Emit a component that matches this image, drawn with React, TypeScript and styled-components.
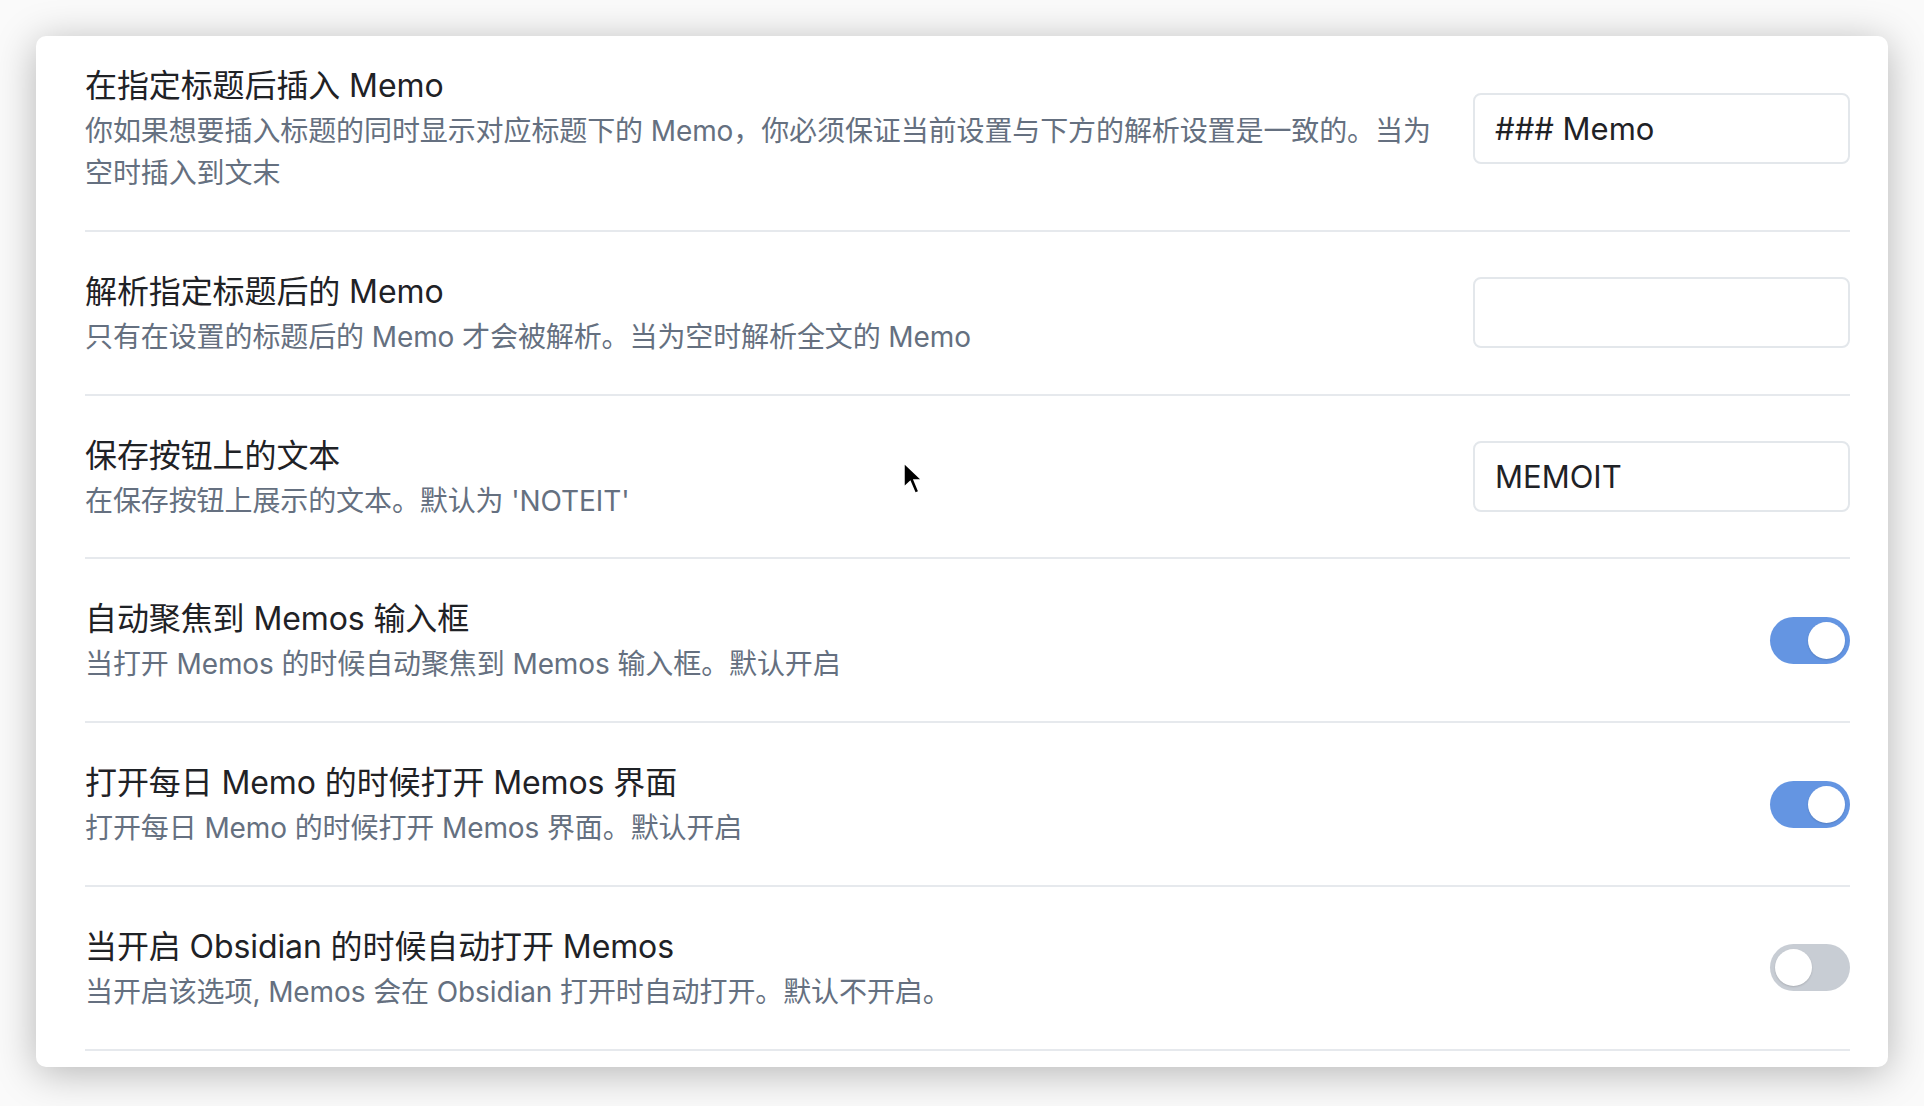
import React from "react";
import styled, { createGlobalStyle } from "styled-components";

const GlobalStyle = createGlobalStyle`
  html, body {
    margin: 0;
    padding: 0;
    background: #ffffff;
  }
  body {
    font-family: Inter, "Noto Sans CJK SC", sans-serif;
    -webkit-font-smoothing: antialiased;
  }
`;

const Page = styled.div`
  position: relative;
  width: 1924px;
  height: 1106px;
  padding: 36px 36px 0 36px;
  box-sizing: border-box;
  overflow: hidden;
  background: #fafafa;
`;

const Card = styled.div`
  background: #ffffff;
  border-radius: 10px;
  box-shadow: 0 6px 40px rgba(0, 0, 0, 0.28);
  padding: 26px 38px 15px 49px;
  height: 1031px;
  box-sizing: border-box;
`;

const Row = styled.div`
  display: flex;
  align-items: center;
  gap: 30px;
  padding: 36px 0 35.8px;
  border-bottom: 2px solid #e6e9ed;

  &:first-child {
    padding-top: 0;
  }
`;

const Info = styled.div`
  flex: 1;
  min-width: 0;
`;

const Name = styled.div`
  font-size: 32px;
  line-height: 48px;
  letter-spacing: -0.1px;
  color: #1f2226;
`;

const Description = styled.div`
  font-size: 28px;
  line-height: 42px;
  letter-spacing: -0.1px;
  color: #657080;
`;

const TextInput = styled.input`
  flex: none;
  width: 377px;
  height: 71px;
  box-sizing: border-box;
  padding: 0 20px;
  border: 2px solid #e3e7eb;
  border-radius: 8px;
  background: #ffffff;
  font-family: Inter, "Noto Sans CJK SC", sans-serif;
  font-size: 31px;
  color: #1f2226;
  outline: none;
`;

const Toggle = styled.div<{ $on: boolean }>`
  flex: none;
  position: relative;
  width: 80px;
  height: 47px;
  border-radius: 24px;
  background: ${({ $on }) => ($on ? "#6495e2" : "#c8cdd4")};

  &::after {
    content: "";
    position: absolute;
    top: 5px;
    left: ${({ $on }) => ($on ? "38px" : "5px")};
    width: 37px;
    height: 37px;
    border-radius: 50%;
    background: #ffffff;
    box-shadow: 0 1px 2px rgba(0, 0, 0, 0.15);
  }
`;

const Cursor = styled.svg`
  position: absolute;
  left: 900px;
  top: 457px;
`;

interface Setting {
  name: string;
  desc: string;
  input?: string;
  toggle?: boolean;
}

const settings: Setting[] = [
  {
    name: "在指定标题后插入 Memo",
    desc:
      "你如果想要插入标题的同时显示对应标题下的 Memo，你必须保证当前设置与下方的解析设置是一致的。当为空时插入到文末",
    input: "### Memo",
  },
  {
    name: "解析指定标题后的 Memo",
    desc: "只有在设置的标题后的 Memo 才会被解析。当为空时解析全文的 Memo",
    input: "",
  },
  {
    name: "保存按钮上的文本",
    desc: "在保存按钮上展示的文本。默认为 'NOTEIT'",
    input: "MEMOIT",
  },
  {
    name: "自动聚焦到 Memos 输入框",
    desc: "当打开 Memos 的时候自动聚焦到 Memos 输入框。默认开启",
    toggle: true,
  },
  {
    name: "打开每日 Memo 的时候打开 Memos 界面",
    desc: "打开每日 Memo 的时候打开 Memos 界面。默认开启",
    toggle: true,
  },
  {
    name: "当开启 Obsidian 的时候自动打开 Memos",
    desc: "当开启该选项, Memos 会在 Obsidian 打开时自动打开。默认不开启。",
    toggle: false,
  },
];

const App: React.FC = () => {
  return (
    <Page>
      <GlobalStyle />
      <Card>
        {settings.map((s) => (
          <Row key={s.name}>
            <Info>
              <Name>{s.name}</Name>
              <Description>{s.desc}</Description>
            </Info>
            {s.input !== undefined ? (
              <TextInput defaultValue={s.input} />
            ) : (
              <Toggle $on={!!s.toggle} />
            )}
          </Row>
        ))}
      </Card>
      <Cursor width="29" height="43" viewBox="0 0 22 32">
        <path
          d="M2 2 L2 25 L7.5 19.8 L11.2 28.6 L15.4 26.8 L11.8 18.4 L19 18.4 Z"
          fill="#ffffff"
          stroke="#ffffff"
          strokeWidth="1.5"
          strokeLinejoin="round"
        />
        <path
          d="M3.6 5.6 L3.6 21.4 L7.9 17.3 L11.8 26.4 L13.6 25.6 L9.8 16.6 L15.2 16.6 Z"
          fill="#000000"
        />
      </Cursor>
    </Page>
  );
};

export default App;
